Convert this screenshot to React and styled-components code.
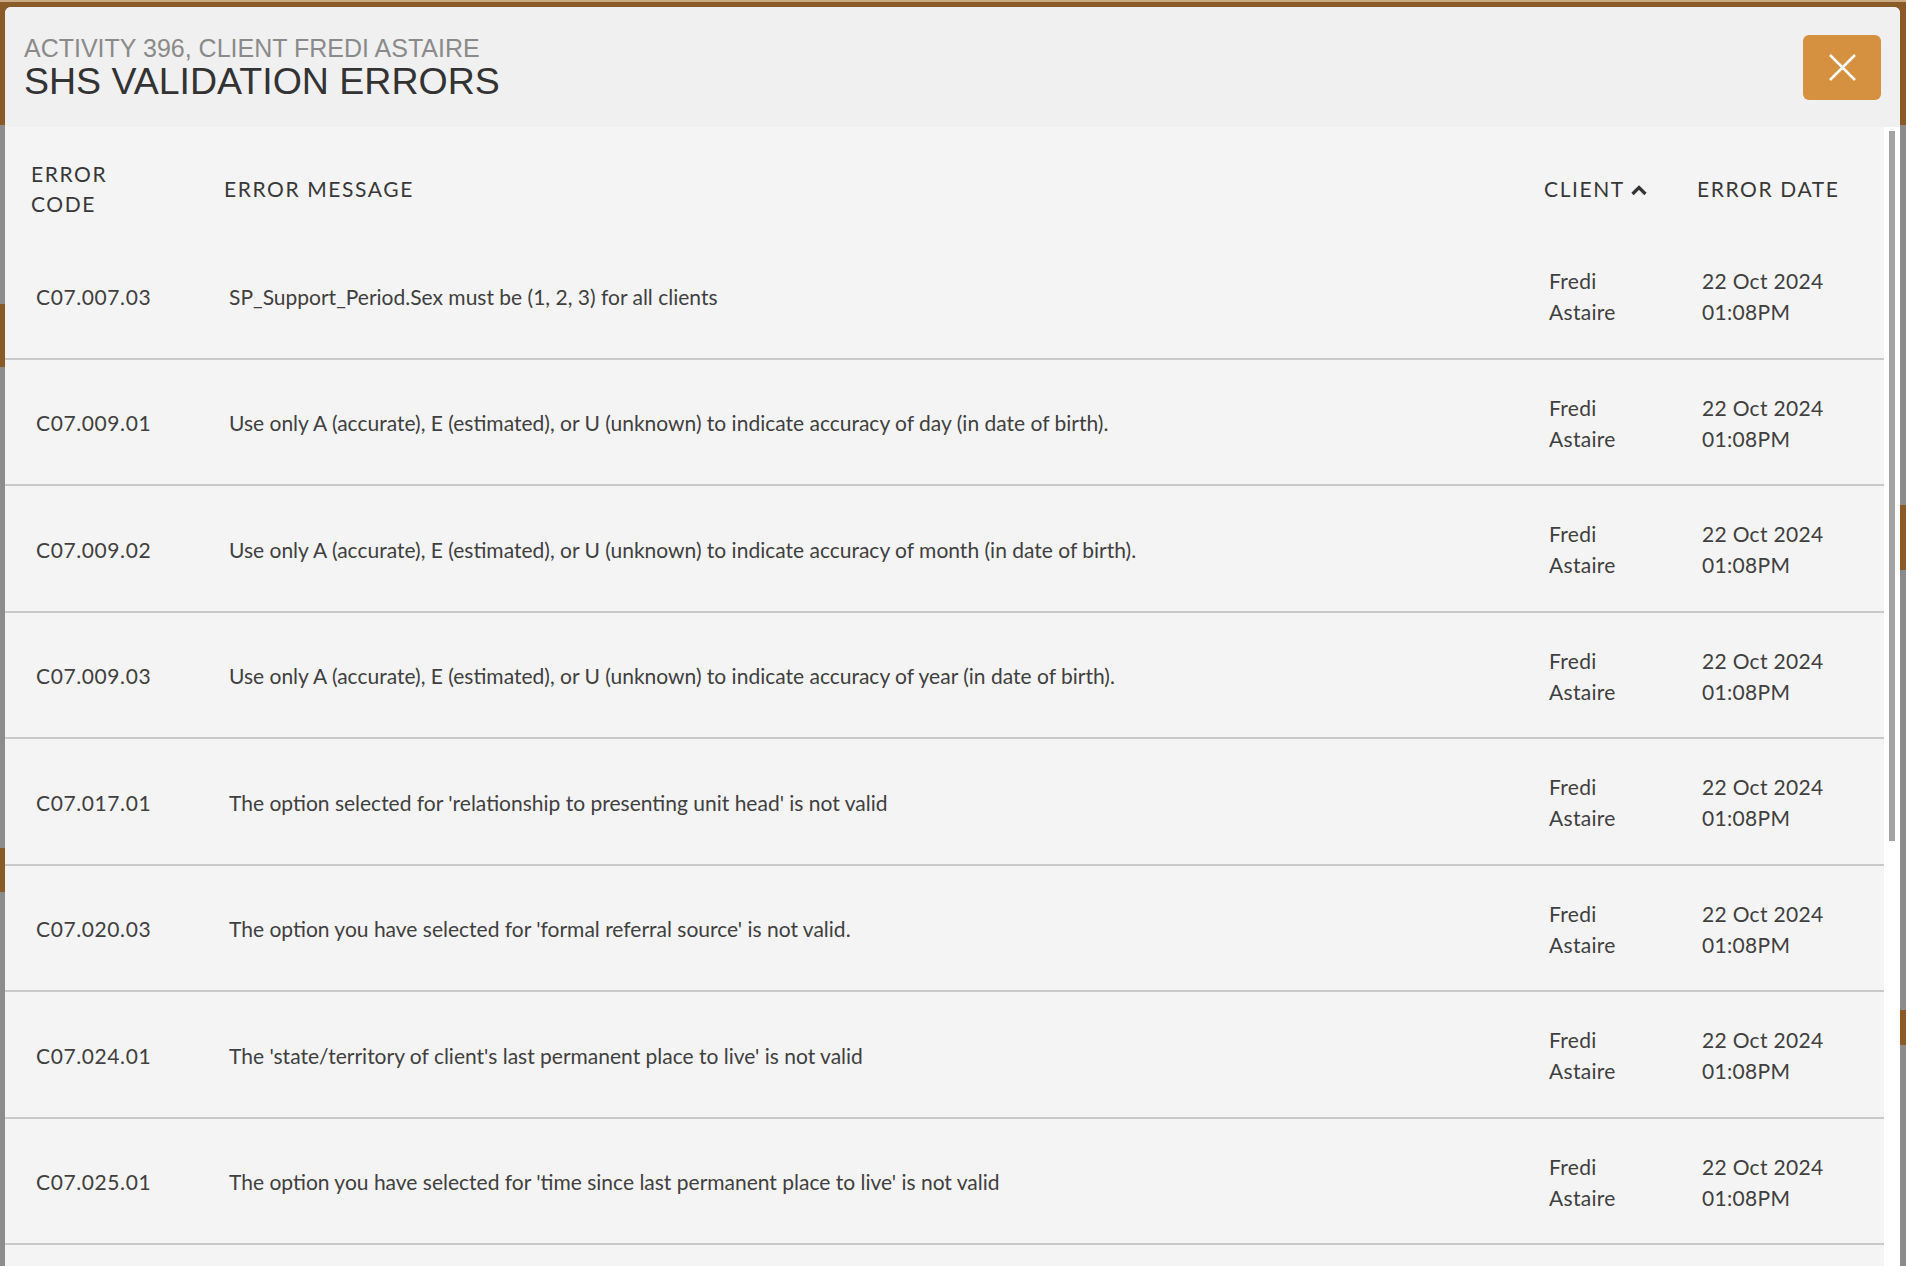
import React from 'react';
import styled, {createGlobalStyle} from 'styled-components';

const GlobalStyle = createGlobalStyle`
  html, body {
    margin: 0;
    padding: 0;
    height: 100%;
    overflow: hidden;
  }
  #root {
    height: 100%;
  }
`;

const Color = {
  brown: '#8b5a29',
  tan: '#c9ab83',
  dim: '#8c8c8c',
  header: '#f0f0f0',
  body: '#f4f4f4',
  line: '#c9c9c9',
  text: '#404040',
  muted: '#8a8a8a',
  orange: '#d69140',
  thumb: '#a3a3a3',
};

// page underneath the overlay, only its edges show
const Page = styled.div`
  position: relative;
  height: 100vh;
  background-color: ${Color.dim};
  display: flex;
  flex-direction: column;
`;

const PageTopLine = styled.div`
  height: 2px;
  background-color: ${Color.tan};
`;

const PageColumns = styled.div`
  flex: 1;
  display: grid;
  grid-template-columns: 1fr 1fr;
`;

const PageColumn = styled.div`
  display: flex;
  flex-direction: column;
`;

const Band = styled.div`
  height: ${(props) => props.$h}px;
  background-color: ${(props) => (props.$brown ? Color.brown : Color.dim)};
`;

const Modal = styled.div`
  position: absolute;
  top: 7px;
  left: 5px;
  right: 6px;
  bottom: 0;
  display: flex;
  flex-direction: column;
  background-color: ${Color.body};
  border-radius: 6px 6px 0 0;
  overflow: hidden;
`;

const ModalHeader = styled.div`
  height: 120px;
  flex-shrink: 0;
  display: flex;
  align-items: center;
  justify-content: space-between;
  padding: 0 19px 0 19px;
  background-color: ${Color.header};
`;

const TitleBlock = styled.div`
  display: flex;
  flex-direction: column;
  font-family: 'Liberation Sans', Arial, sans-serif;
  text-transform: uppercase;
`;

const SubTitle = styled.div`
  font-size: 25px;
  line-height: 27px;
  color: ${Color.muted};
`;

const Title = styled.div`
  font-size: 37.5px;
  line-height: 38px;
  color: #333;
`;

const CloseButton = styled.button`
  width: 78px;
  height: 65px;
  border: none;
  border-radius: 6px;
  background-color: ${Color.orange};
  display: flex;
  align-items: center;
  justify-content: center;
  padding: 0;
  cursor: pointer;
`;

const ModalBody = styled.div`
  flex: 1;
  display: flex;
  min-height: 0;
`;

const Table = styled.div`
  flex: 1;
  overflow: hidden;
`;

const ScrollTrack = styled.div`
  width: 16px;
  flex-shrink: 0;
  background-color: #fff;
  padding: 4px 5px 0 5px;
  box-sizing: border-box;
`;

const ScrollThumb = styled.div`
  width: 6px;
  height: 710px;
  background-color: ${Color.thumb};
`;

const Row = styled.div`
  display: grid;
  grid-template-columns: 193px 1320px 153px 1fr;
  align-items: center;
  padding-left: 26px;
  box-sizing: border-box;
  color: ${Color.text};
`;

const HeadRow = styled(Row)`
  height: 106px;
  padding-top: 18px;
  font-family: Lato, 'Open Sans', sans-serif;
  font-size: 21px;
  line-height: 30px;
  letter-spacing: 1.6px;
  text-transform: uppercase;
  color: #383838;
`;

const HeadCell = styled.div`
  display: flex;
  align-items: center;
  gap: 5px;
`;

const BodyRow = styled(Row)`
  height: 126.5px;
  padding-top: 2px;
  border-bottom: 2px solid ${Color.line};
  font-family: Lato, 'Open Sans', sans-serif;
  font-size: 21px;
  line-height: 31px;
`;

const Cell = styled.div`
  padding-left: 5px;
  letter-spacing: ${(props) => (props.$code ? '0.6px' : 'normal')};
`;

const CellLine = styled.div`
  letter-spacing: 0.3px;
`;

const Chevron = () => (
  <svg width="18" height="13" viewBox="0 0 18 13">
    <path d="M2.5 11 L9 4.5 L15.5 11" fill="none" stroke="#333" strokeWidth="3.2" />
  </svg>
);

const CloseIcon = () => (
  <svg width="27" height="27" viewBox="0 0 27 27">
    <path d="M1 1 L26 26 M26 1 L1 26" stroke="#fff" strokeWidth="2.5" />
  </svg>
);

const errors = [
  ['C07.007.03', 'SP_Support_Period.Sex must be (1, 2, 3) for all clients'],
  ['C07.009.01', 'Use only A (accurate), E (estimated), or U (unknown) to indicate accuracy of day (in date of birth).'],
  ['C07.009.02', 'Use only A (accurate), E (estimated), or U (unknown) to indicate accuracy of month (in date of birth).'],
  ['C07.009.03', 'Use only A (accurate), E (estimated), or U (unknown) to indicate accuracy of year (in date of birth).'],
  ['C07.017.01', "The option selected for 'relationship to presenting unit head' is not valid"],
  ['C07.020.03', "The option you have selected for 'formal referral source' is not valid."],
  ['C07.024.01', "The 'state/territory of client's last permanent place to live' is not valid"],
  ['C07.025.01', "The option you have selected for 'time since last permanent place to live' is not valid"],
];

export default function App() {
  return (
    <>
      <GlobalStyle />
      <Page>
        <PageTopLine />
        <PageColumns>
          <PageColumn>
            <Band $brown $h={123} />
            <Band $h={179} />
            <Band $brown $h={63} />
            <Band $h={481} />
            <Band $brown $h={44} />
          </PageColumn>
          <PageColumn>
            <Band $brown $h={123} />
            <Band $h={380} />
            <Band $brown $h={65} />
            <Band $h={440} />
            <Band $brown $h={35} />
          </PageColumn>
        </PageColumns>

        <Modal>
          <ModalHeader>
            <TitleBlock>
              <SubTitle>Activity 396, Client Fredi Astaire</SubTitle>
              <Title>SHS Validation Errors</Title>
            </TitleBlock>
            <CloseButton aria-label="Close">
              <CloseIcon />
            </CloseButton>
          </ModalHeader>

          <ModalBody>
            <Table>
              <HeadRow>
                <HeadCell>
                  Error
                  <br />
                  Code
                </HeadCell>
                <HeadCell>Error Message</HeadCell>
                <HeadCell>
                  Client <Chevron />
                </HeadCell>
                <HeadCell>Error Date</HeadCell>
              </HeadRow>
              {errors.map(([code, message]) => (
                <BodyRow key={code}>
                  <Cell $code>{code}</Cell>
                  <Cell>{message}</Cell>
                  <Cell>
                    <CellLine>Fredi</CellLine>
                    <CellLine>Astaire</CellLine>
                  </Cell>
                  <Cell>
                    <CellLine>22 Oct 2024</CellLine>
                    <CellLine>01:08PM</CellLine>
                  </Cell>
                </BodyRow>
              ))}
            </Table>
            <ScrollTrack>
              <ScrollThumb />
            </ScrollTrack>
          </ModalBody>
        </Modal>
      </Page>
    </>
  );
}
